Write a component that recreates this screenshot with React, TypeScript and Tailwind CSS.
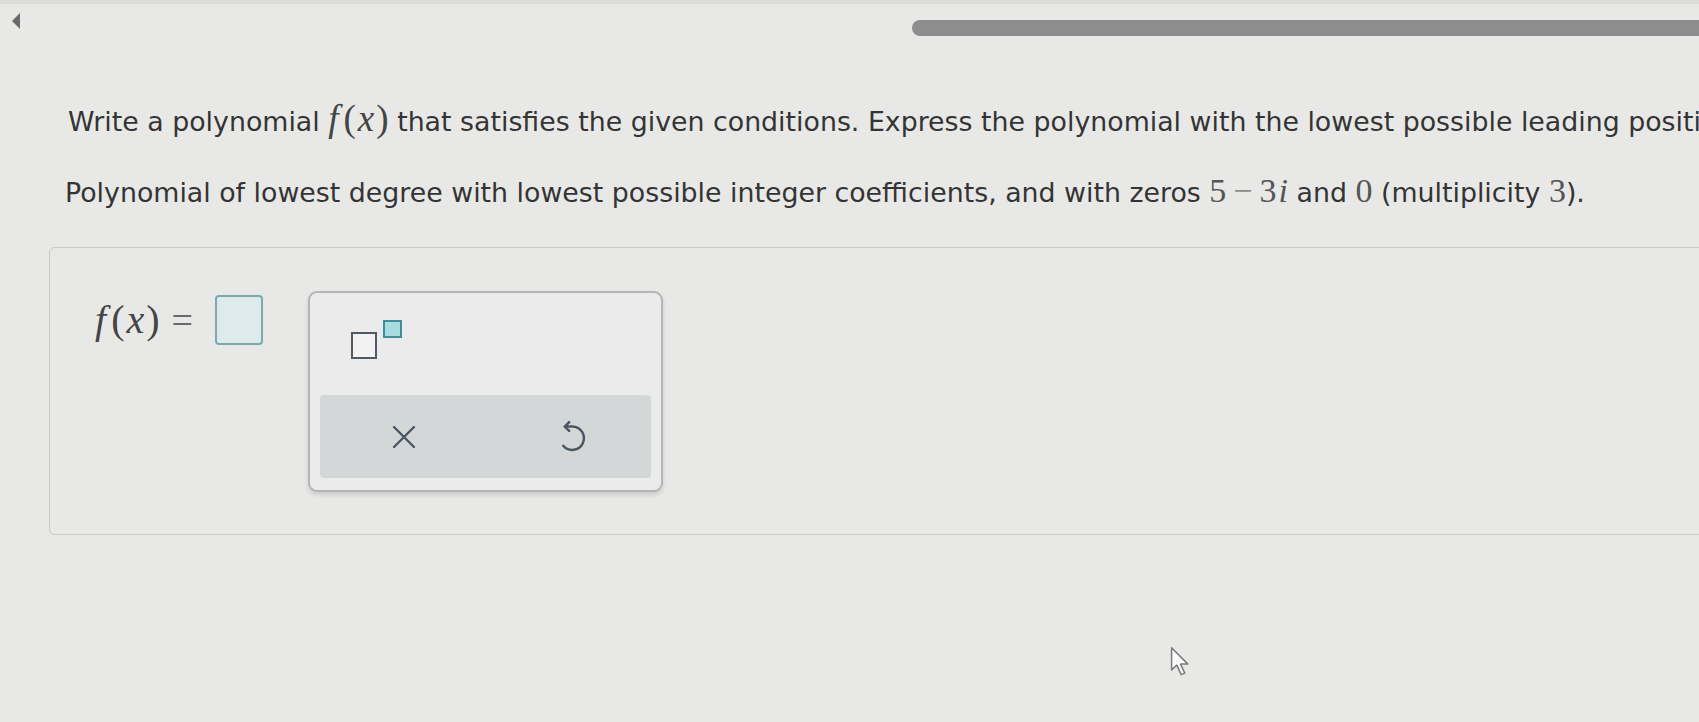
function UndoIcon() {
  return (
    <svg viewBox="0 0 26 26" className="h-[32px] w-[32px]" fill="none" stroke="#4b5661" strokeWidth={2} strokeLinecap="round" strokeLinejoin="round" aria-hidden="true">
      <path d="M8 4.5h6a9.5 9.5 0 1 1-7.3 15.6" />
      <path d="M11.5 1 8 4.5 11.5 8" />
    </svg>
  );
}

function CloseIcon() {
  return (
    <svg viewBox="0 0 24 24" className="h-[24px] w-[24px]" fill="none" stroke="#4b5661" strokeWidth={2.4} strokeLinecap="round" aria-hidden="true">
      <path d="M2 2l20 20M22 2 2 22" />
    </svg>
  );
}

function Cursor() {
  return (
    <svg viewBox="0 0 18 30" className="absolute left-[1170px] top-[646px] h-[32px] w-[19px]" aria-hidden="true">
      <path d="M1.5 1.5v21l5-4.5 4 9 3.5-1.5-4-8.5h7z" fill="#fafafa" stroke="#7a7a7a" strokeWidth={1.4} strokeLinejoin="round" />
    </svg>
  );
}

function Fx({ size }: { size: string }) {
  return (
    <span className={`font-['Liberation_Serif',serif] leading-none text-[#444] ${size}`}>
      <i className="mr-[5px]">f</i>(<i className="mx-[2px]">x</i>)
    </span>
  );
}

function Num({ children }: { children: React.ReactNode }) {
  return (
    <span className="font-['Liberation_Serif',serif] text-[34px] leading-none text-[#555]">{children}</span>
  );
}

export default function App() {
  return (
    <div className="relative h-[722px] w-[1699px] overflow-hidden bg-[#e8e9e7] font-['DejaVu_Sans',sans-serif] text-[#343434]">
      <div className="h-[4px] bg-[#dcdddb]" />
      <div className="flex h-[41px] items-start">
        <div className="ml-[12px] mt-[9px] h-0 w-0 border-y-[8px] border-r-[8px] border-y-transparent border-r-[#6a6a6a]" />
        <div className="ml-auto mt-[16px] h-[16px] w-[787px] rounded-l-full bg-[#8c8d8c]" />
      </div>

      <div className="pl-[68px]">
        <p className="mt-[55px] h-[32px] whitespace-nowrap text-[26.8px] leading-[32px]">
          Write a polynomial <Fx size="text-[37px]" /> that satisfies the given conditions. Express the polynomial with the lowest possible leading positive coefficient.
        </p>
        <p className="-ml-[3px] mt-[42px] h-[32px] whitespace-nowrap text-[26.8px] leading-[32px]">
          Polynomial of lowest degree with lowest possible integer coefficients, and with zeros{' '}
          <Num>
            5<span className="mx-[7px] text-[#888]">−</span>3<i className="ml-[2px]">i</i>
          </Num>{' '}
          and <Num>0</Num> (multiplicity <Num>3</Num>).
        </p>
      </div>

      <div className="ml-[49px] mt-[41px] h-[288px] w-[1700px] rounded-[6px] border border-[#c9cac8]">
        <div className="flex items-start pl-[45px] pt-[43px]">
          <div className="mt-[4px] flex h-[50px] items-center">
            <Fx size="text-[40px]" />
            <span className="ml-[12px] font-['Liberation_Serif',serif] text-[38px] leading-none text-[#6a6a6a]">=</span>
          </div>
          <div className="ml-[22px] mt-[4px] h-[50px] w-[48px] rounded-[4px] border-2 border-[#7fa7b0] bg-[#dfeaec]" />
          <div className="ml-[45px] h-[201px] w-[355px] rounded-[9px] border-2 border-[#b4b5b4] bg-[#eaebea] shadow-[0_3px_4px_rgba(0,0,0,0.12)]">
            <div className="flex h-[102px] items-start pl-[41px] pt-[27px]">
              <div className="mt-[12px] h-[27px] w-[26px] border-2 border-[#505a64] bg-[#f1f2f1]" />
              <div className="ml-[6px] h-[18px] w-[19px] border-2 border-[#3f8c9b] bg-[#a9dcdf]" />
            </div>
            <div className="mx-[10px] flex h-[83px] items-center rounded-[4px] bg-[#d3d7d8]">
              <div className="flex flex-1 justify-center pl-[4px]">
                <CloseIcon />
              </div>
              <div className="flex flex-1 justify-center pl-[6px]">
                <UndoIcon />
              </div>
            </div>
          </div>
        </div>
      </div>

      <Cursor />
    </div>
  );
}
